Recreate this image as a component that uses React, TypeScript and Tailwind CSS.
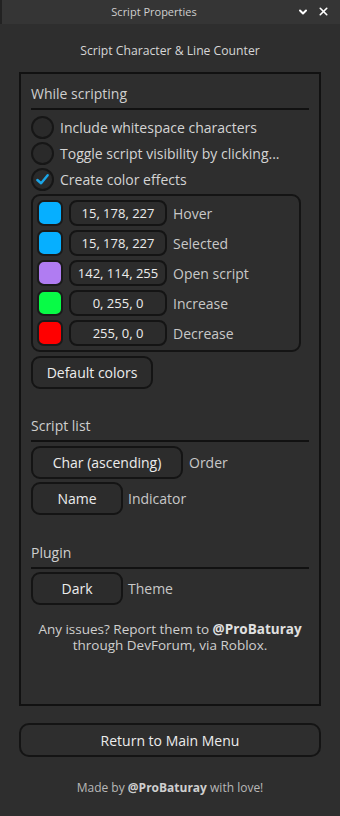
import { ChevronDown, X } from "lucide-react";

const colors = [
  { hex: "#06afff", rgb: "15, 178, 227", label: "Hover" },
  { hex: "#06afff", rgb: "15, 178, 227", label: "Selected" },
  { hex: "#b07cf2", rgb: "142, 114, 255", label: "Open script" },
  { hex: "#08fb46", rgb: "0, 255, 0", label: "Increase" },
  { hex: "#ff0000", rgb: "255, 0, 0", label: "Decrease" },
];

function Check({ checked, label }: { checked?: boolean; label: string }) {
  return (
    <div className="flex h-[26px] items-center gap-[6px]">
      <div className="flex h-[23px] w-[23px] items-center justify-center rounded-full border-2 border-[#161616] bg-[#2a2a2a]">
        {checked && (
          <svg viewBox="0 0 16 16" className="h-[15px] w-[15px]">
            <path d="M2.5 8.5 L6.5 12 L13.5 3.5" fill="none" stroke="#1aa6e8" strokeWidth="2.6" strokeLinecap="round" strokeLinejoin="round" />
          </svg>
        )}
      </div>
      <span className="text-[14px] text-[#d4d4d4]">{label}</span>
    </div>
  );
}

function Section({ title }: { title: string }) {
  return (
    <div className="flex flex-col">
      <span className="text-[14px] leading-[18px] text-[#cfcfcf]">{title}</span>
      <div className="mt-[5px] h-[2px] w-full bg-[#111]" />
    </div>
  );
}

function Btn({ w, text }: { w: string; text: string }) {
  return (
    <div className={`${w} flex h-[33px] items-center justify-center rounded-[9px] border-2 border-[#141414] bg-[#2c2c2c] text-[14px] text-[#ececec]`}>
      {text}
    </div>
  );
}

export default function App() {
  return (
    <div className="flex h-[816px] w-[340px] flex-col bg-[#2e2e2e] font-['Open_Sans',sans-serif]">
      <div className="relative flex h-[24px] items-center justify-center border-l-2 border-[#222] bg-[#353535] pr-[34px]">
        <span className="text-[11px] text-[#cfcfcf]">Script Properties</span>
        <div className="absolute right-[10px] top-[5px] flex items-center gap-[8px] text-white">
          <ChevronDown size={12} strokeWidth={4} />
          <X size={13} strokeWidth={3} />
        </div>
      </div>
      <div className="mt-[18px] text-center text-[12.2px] text-[#d6d6d6]">Script Character &amp; Line Counter</div>

      <div className="mx-[19px] mt-[12px] flex h-[634px] flex-col border-2 border-[#111] px-[10px] pt-[11px]">
        <Section title="While scripting" />
        <div className="mt-[4px] flex flex-col">
          <Check label="Include whitespace characters" />
          <Check label="Toggle script visibility by clicking..." />
          <Check checked label="Create color effects" />
        </div>
        <div className="mt-[2px] flex w-[270px] flex-col gap-[4px] rounded-[9px] border-2 border-[#141414] px-[4px] py-[4px]">
          {colors.map((c) => (
            <div key={c.label} className="flex h-[26px] items-center gap-[6px]">
              <div className="h-[26px] w-[26px] rounded-[7px] border-2 border-[#1a1a1a]" style={{ backgroundColor: c.hex }} />
              <div className="flex h-[26px] w-[98px] items-center justify-center rounded-[8px] border-2 border-[#141414] bg-[#2c2c2c] text-[13px] text-[#ececec]">
                {c.rgb}
              </div>
              <span className="text-[14px] text-[#c8c8c8]">{c.label}</span>
            </div>
          ))}
        </div>
        <div className="mt-[4px]">
          <Btn w="w-[122px]" text="Default colors" />
        </div>

        <div className="mt-[28px]">
          <Section title="Script list" />
        </div>
        <div className="mt-[4px] flex items-center gap-[6px]">
          <Btn w="w-[152px]" text="Char (ascending)" />
          <span className="text-[14px] text-[#c8c8c8]">Order</span>
        </div>
        <div className="mt-[3px] flex items-center gap-[5px]">
          <Btn w="w-[92px]" text="Name" />
          <span className="text-[14px] text-[#c8c8c8]">Indicator</span>
        </div>

        <div className="mt-[29px]">
          <Section title="Plugin" />
        </div>
        <div className="mt-[3px] flex items-center gap-[5px]">
          <Btn w="w-[92px]" text="Dark" />
          <span className="text-[14px] text-[#c8c8c8]">Theme</span>
        </div>
        <p className="mt-[16px] text-center text-[13.5px] leading-[16px] text-[#cfcfcf]">
          Any issues? Report them to <b className="text-[#e0e0e0]">@ProBaturay</b>
          <br />
          through DevForum, via Roblox.
        </p>
      </div>

      <div className="mx-[19px] mt-[17px] flex h-[34px] items-center justify-center rounded-[10px] border-2 border-[#141414] text-[14px] text-[#ececec]">
        Return to Main Menu
      </div>
      <div className="mt-[22px] text-center text-[12px] text-[#b8b8b8]">
        Made by <b className="text-[#cfcfcf]">@ProBaturay</b> with love!
      </div>
    </div>
  );
}
